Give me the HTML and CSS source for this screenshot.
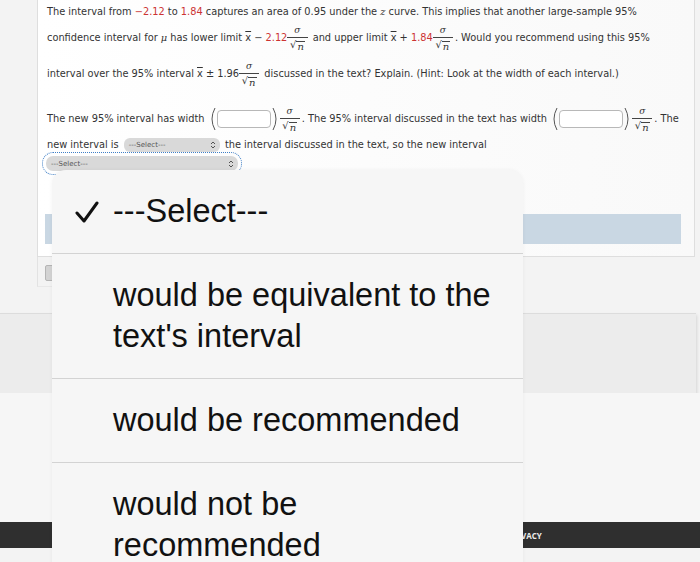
FILE: index.html
```html
<!DOCTYPE html>
<html>
<head>
<meta charset="utf-8">
<link rel="stylesheet" href="styles.css">
</head>
<body>
<div class="page">
  <div class="card">
    <div class="line l1">The interval from <span class="red">&minus;2.12</span> to <span class="red">1.84</span> captures an area of 0.95 under the <i>z</i> curve. This implies that another large-sample 95%</div>
    <div class="line l2">confidence interval for <i>&mu;</i> has lower limit <span class="xbar">x</span> &minus; <span class="red">2.12</span><span class="frac"><span class="num">&sigma;</span><span class="den">&radic;<span class="rad">n</span></span></span> and upper limit <span class="xbar">x</span> + <span class="red">1.84</span><span class="frac"><span class="num">&sigma;</span><span class="den">&radic;<span class="rad">n</span></span></span>. Would you recommend using this 95%</div>
    <div class="line l3">interval over the 95% interval <span class="xbar">x</span> &plusmn; 1.96<span class="frac"><span class="num">&sigma;</span><span class="den">&radic;<span class="rad">n</span></span></span> discussed in the text? Explain. (Hint: Look at the width of each interval.)</div>

    <div class="line la">The new 95% interval has width <svg class="paren" viewBox="0 0 7 24" width="7" height="24"><path d="M6 1 Q0 12 6 23" fill="none" stroke="#555" stroke-width="1"/></svg><span class="box"></span><svg class="paren" viewBox="0 0 7 24" width="7" height="24"><path d="M1 1 Q7 12 1 23" fill="none" stroke="#555" stroke-width="1"/></svg><span class="frac"><span class="num">&sigma;</span><span class="den">&radic;<span class="rad">n</span></span></span>. The 95% interval discussed in the text has width <svg class="paren" viewBox="0 0 7 24" width="7" height="24"><path d="M6 1 Q0 12 6 23" fill="none" stroke="#555" stroke-width="1"/></svg><span class="box box2"></span><svg class="paren" viewBox="0 0 7 24" width="7" height="24"><path d="M1 1 Q7 12 1 23" fill="none" stroke="#555" stroke-width="1"/></svg><span class="frac"><span class="num">&sigma;</span><span class="den">&radic;<span class="rad">n</span></span></span>. The</div>
    <div class="line lb">new interval is <span class="sel"><span>---Select---</span><svg width="6" height="8" viewBox="0 0 6 8"><path d="M1 3 L3 1 L5 3 M1 5 L3 7 L5 5" fill="none" stroke="#444" stroke-width="0.9"/></svg></span> the interval discussed in the text, so the new interval</div>
    <div class="lc"><span class="ring"><span class="sel sel2"><span>---Select---</span><svg width="6" height="8" viewBox="0 0 6 8"><path d="M1 3 L3 1 L5 3 M1 5 L3 7 L5 5" fill="none" stroke="#444" stroke-width="0.9"/></svg></span></span></div>
    <div class="bar"></div>
  </div>
  <div class="subbox"><span class="chk"></span></div>
  <div class="band"></div>
  <div class="gap"></div>
  <div class="footer"><span class="flink">PRIVACY</span></div>
</div>

<div class="menu">
  <div class="item"><span class="gut"><svg width="24" height="24" viewBox="0 0 24 24"><path d="M2 13 L9 21 L22 3" fill="none" stroke="#111" stroke-width="3" stroke-linecap="round" stroke-linejoin="round"/></svg></span><span class="txt">---Select---</span></div>
  <div class="item"><span class="gut"></span><span class="txt">would be equivalent to the<br>text's interval</span></div>
  <div class="item"><span class="gut"></span><span class="txt">would be recommended</span></div>
  <div class="item"><span class="gut"></span><span class="txt">would not be<br>recommended</span></div>
</div>
</body>
</html>
```

FILE: styles.css
```css
html, body {
  margin: 0;
  padding: 0;
  height: 562px;
  overflow: hidden;
}
body {
  background: #f3f3f3;
  font-family: "DejaVu Sans", Verdana, sans-serif;
  color: #333;
  position: relative;
}
.page {
  width: 700px;
  display: flex;
  flex-direction: column;
}
.card {
  margin-left: 37px;
  width: 658px;
  height: 257px;
  box-sizing: border-box;
  padding-left: 9px;
  background: linear-gradient(to right, #ffffff, #f9f9f9);
  border: 1px solid #dedede;
  border-top: none;
  font-size: 9.8px;
  display: flex;
  flex-direction: column;
}
.line {
  white-space: nowrap;
  flex: none;
}
.l1 { height: 24px; line-height: 24px; }
.l2 { height: 26px; line-height: 26px; }
.l3 { height: 26px; line-height: 26px; margin-top: 10px; }
.la { height: 26px; line-height: 26px; margin-top: 19px; }
.lb { height: 14px; line-height: 14px; margin-top: 7px; }
.lc { margin-top: 0; margin-left: -5px; height: 22px; display: flex; }
.red { color: #cc3333; }
.xbar { text-decoration: overline; }
i { font-family: "DejaVu Serif", serif; font-style: italic; }
.frac {
  display: inline-flex;
  flex-direction: column;
  align-items: center;
  vertical-align: middle;
  font-size: 9px;
  line-height: 12px;
  margin: 0 2px 0 0;
}
.frac .num {
  font-family: "DejaVu Serif", serif;
  font-style: italic;
  border-bottom: 1px solid #444;
  padding: 0 7px 1px;
  text-align: center;
  align-self: stretch;
}
.frac .den { display: flex; font-size: 10px; margin-top: 1px; }
.frac .rad {
  font-family: "DejaVu Serif", serif;
  font-style: italic;
  border-top: 1px solid #444;
  line-height: 10px;
  margin-top: 2px;
  padding: 0 1px;
}
.paren { display: inline-block; vertical-align: middle; margin: 0 1px; }
.box {
  display: inline-block;
  vertical-align: middle;
  width: 54px;
  height: 18px;
  box-sizing: border-box;
  border: 1px solid #b8b8b8;
  border-radius: 4px;
  background: #fff;
}
.box2 { width: 64px; }
.sel {
  display: inline-flex;
  vertical-align: middle;
  align-items: center;
  justify-content: space-between;
  box-sizing: border-box;
  width: 96px;
  height: 14px;
  padding: 0 4px 0 5px;
  margin: 0 2px;
  background: #d9d9d9;
  border-radius: 6px;
  font-size: 7px;
  line-height: 14px;
  color: #555;
}
.ring {
  display: flex;
  padding: 3px 3px;
  border: 1.5px dotted #3f7fc6;
  border-radius: 11px;
  height: 15px;
}
.sel2 { width: 192px; height: 15px; margin: 0; border-radius: 7px; }
.bar {
  margin-top: 40px;
  margin-left: -2px;
  width: 636px;
  height: 30px;
  background: #c9d7e3;
}
.subbox {
  margin-left: 37px;
  width: 30px;
  height: 30px;
  border-left: 1px solid #e2e2e2;
  border-bottom: 1px solid #e8e8e8;
  box-sizing: border-box;
  padding: 8px 0 0 7px;
}
.chk {
  display: block;
  width: 7px;
  height: 14px;
  border: 1px solid #b5b5b5;
  border-radius: 2px;
  background: #d3d3d3;
}
.band {
  margin-top: 26px;
  width: 696px;
  height: 80px;
  background: #ececec;
  border-top: 1px solid #dcdcdc;
  box-sizing: border-box;
  box-shadow: 1px 2px 3px rgba(0,0,0,0.12);
}
.gap { height: 129px; background: #f6f6f6; }
.footer {
  height: 26px;
  background: #2f2f2f;
  display: flex;
  align-items: center;
  padding-left: 508px;
}
.flink {
  color: #eee;
  font-size: 8px;
  font-weight: bold;
  font-family: "Open Sans", "DejaVu Sans", sans-serif;
}
.menu {
  position: absolute;
  left: 52px;
  top: 170px;
  width: 471px;
  height: 420px;
  background: #f6f6f6;
  border-radius: 14px 14px 0 0;
  box-shadow: 0 0 4px rgba(0,0,0,0.05);
  font-family: "Liberation Sans", Arial, sans-serif;
  font-size: 32.5px;
  color: #111;
  display: flex;
  flex-direction: column;
}
.item {
  display: flex;
  align-items: center;
  padding: 21px 0 21px 23px;
  line-height: 41px;
  border-bottom: 1.5px solid #d3d3d3;
}
.item:last-child { border-bottom: none; }
.gut {
  width: 38px;
  flex: none;
  display: flex;
  align-items: center;
}
.gut svg { display: block; }
```
